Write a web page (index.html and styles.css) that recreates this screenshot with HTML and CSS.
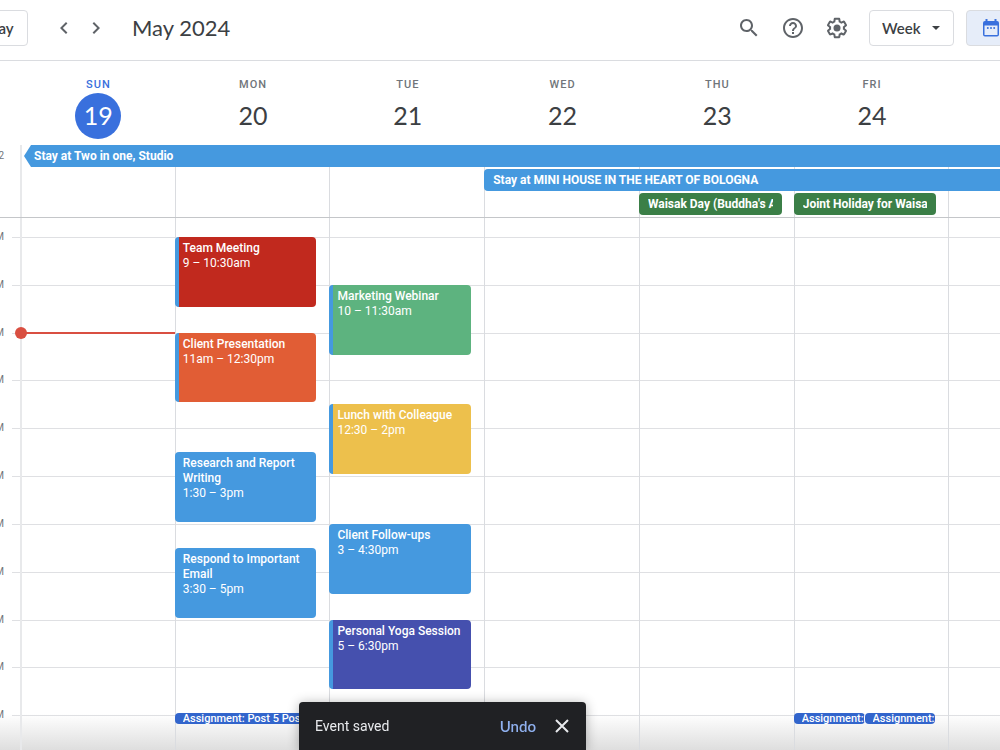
FILE: index.html
```html
<!DOCTYPE html>
<html lang="en">
<head>
    <meta charset="UTF-8">
    <meta name="viewport" content="width=device-width, initial-scale=1.0">
    <title>Calendar - May 2024</title>
    <link rel="stylesheet" href="styles.css">
</head>
<body>
    <header class="toolbar">
        <button class="box-btn today-btn" type="button">Today</button>
        <nav class="pager">
            <button class="icon-btn" type="button" aria-label="Previous week">
                <svg viewBox="0 0 24 24"><path d="M15.41 7.41L14 6l-6 6 6 6 1.41-1.41L10.83 12z"/></svg>
            </button>
            <button class="icon-btn" type="button" aria-label="Next week">
                <svg viewBox="0 0 24 24"><path d="M8.59 16.59L10 18l6-6-6-6-1.41 1.41L13.17 12z"/></svg>
            </button>
        </nav>
        <h1>May 2024</h1>
        <div class="tools">
            <button class="icon-btn" type="button" aria-label="Search">
                <svg viewBox="0 0 24 24"><path d="M15.5 14h-.79l-.28-.27C15.41 12.59 16 11.11 16 9.5 16 5.91 13.09 3 9.5 3S3 5.91 3 9.5 5.91 16 9.5 16c1.61 0 3.09-.59 4.23-1.57l.27.28v.79l5 4.99L20.49 19l-4.99-5zm-6 0C7.01 14 5 11.99 5 9.5S7.01 5 9.5 5 14 7.01 14 9.5 11.99 14 9.5 14z"/></svg>
            </button>
            <button class="icon-btn" type="button" aria-label="Support">
                <svg viewBox="0 0 24 24"><path d="M11 18h2v-2h-2v2zm1-16C6.48 2 2 6.48 2 12s4.48 10 10 10 10-4.48 10-10S17.52 2 12 2zm0 18c-4.41 0-8-3.59-8-8s3.59-8 8-8 8 3.59 8 8-3.59 8-8 8zm0-14c-2.21 0-4 1.79-4 4h2c0-1.1.9-2 2-2s2 .9 2 2c0 2-3 1.75-3 5h2c0-2.25 3-2.5 3-5 0-2.21-1.79-4-4-4z"/></svg>
            </button>
            <button class="icon-btn" type="button" aria-label="Settings">
                <svg viewBox="0 0 24 24"><path d="M13.85 22.25h-3.7c-.74 0-1.36-.54-1.45-1.27l-.27-1.89c-.27-.14-.53-.29-.79-.46l-1.8.72c-.7.26-1.47-.03-1.81-.65L2.2 15.53c-.35-.66-.2-1.44.36-1.88l1.53-1.19c-.01-.15-.02-.3-.02-.46 0-.15.01-.31.02-.46l-1.52-1.19c-.59-.45-.74-1.26-.37-1.88l1.85-3.19c.34-.62 1.11-.9 1.79-.63l1.81.73c.26-.17.52-.32.78-.46l.27-1.91c.09-.7.71-1.25 1.44-1.25h3.7c.74 0 1.36.54 1.45 1.27l.27 1.89c.27.14.53.29.79.46l1.8-.72c.71-.26 1.48.03 1.82.65l1.84 3.18c.36.66.2 1.44-.36 1.88l-1.52 1.19c.01.15.02.3.02.46s-.01.31-.02.46l1.52 1.19c.56.45.72 1.23.37 1.86l-1.86 3.22c-.34.62-1.11.9-1.8.63l-1.8-.72c-.26.17-.52.32-.78.46l-.27 1.91c-.1.68-.72 1.22-1.46 1.22zm-3.23-2h2.76l.37-2.55.53-.22c.44-.18.88-.44 1.34-.78l.45-.34 2.38.96 1.38-2.4-2.03-1.58.07-.56c.03-.26.06-.51.06-.78s-.03-.53-.06-.78l-.07-.56 2.03-1.58-1.39-2.4-2.39.96-.45-.35c-.42-.32-.87-.58-1.33-.77l-.52-.22-.37-2.55h-2.76l-.37 2.55-.53.21c-.44.19-.88.44-1.34.79l-.45.33-2.38-.95-1.39 2.39 2.03 1.58-.07.56a7 7 0 0 0-.06.79c0 .26.02.53.06.78l.07.56-2.03 1.58 1.38 2.4 2.39-.96.45.35c.43.33.86.58 1.33.77l.53.22.38 2.55z"/><circle cx="12" cy="12" r="3.5"/></svg>
            </button>
        </div>
        <label class="view-select">
            <select class="box-btn" aria-label="View">
                <option>Day</option>
                <option selected>Week</option>
                <option>Month</option>
            </select>
            <svg viewBox="0 0 8 4"><path d="M0 0h8L4 4z"/></svg>
        </label>
        <button class="box-btn calendar-btn" type="button" aria-label="Switch to Calendar">
            <svg viewBox="0 0 16 18"><path fill-rule="evenodd" d="M2.500 0h2v2h7V0h2v2H14a2 2 0 0 1 2 2v11.500a2 2 0 0 1-2 2H2a2 2 0 0 1-2-2V4a2 2 0 0 1 2-2h.5zM1.500 6.500v9.500h13v-9.500z"/><circle cx="4.800" cy="9" r="1"/><circle cx="8" cy="9" r="1"/><circle cx="11.200" cy="9" r="1"/></svg>
        </button>
    </header>

    <main class="calendar">
        <section class="week-grid day-names">
            <div class="day sun current"><span>SUN</span><b>19</b></div>
            <div class="day mon"><span>MON</span><b>20</b></div>
            <div class="day tue"><span>TUE</span><b>21</b></div>
            <div class="day wed"><span>WED</span><b>22</b></div>
            <div class="day thu"><span>THU</span><b>23</b></div>
            <div class="day fri"><span>FRI</span><b>24</b></div>
        </section>

        <section class="week-grid all-day">
            <div class="column sun"></div>
            <div class="column mon"></div>
            <div class="column tue"></div>
            <div class="column wed"></div>
            <div class="column thu"></div>
            <div class="column fri"></div>
            <div class="column sat"></div>
            <div class="gutter-label timezone">GMT+02</div>
            <div class="bar stay continued"><span>Stay at Two in one, Studio</span></div>
            <div class="bar stay from-wed"><span>Stay at MINI HOUSE IN THE HEART OF BOLOGNA</span></div>
            <div class="bar holiday thu"><span>Waisak Day (Buddha's Anniversary)</span></div>
            <div class="bar holiday fri"><span>Joint Holiday for Waisak Day</span></div>
        </section>

        <section class="week-grid hours">
            <div class="hour-line at-9"></div>
            <div class="hour-line at-10"></div>
            <div class="hour-line at-11"></div>
            <div class="hour-line at-12"></div>
            <div class="hour-line at-13"></div>
            <div class="hour-line at-14"></div>
            <div class="hour-line at-15"></div>
            <div class="hour-line at-16"></div>
            <div class="hour-line at-17"></div>
            <div class="hour-line at-18"></div>
            <div class="hour-line at-19"></div>

            <div class="column sun"></div>
            <div class="column mon"></div>
            <div class="column tue"></div>
            <div class="column wed"></div>
            <div class="column thu"></div>
            <div class="column fri"></div>
            <div class="column sat"></div>

            <div class="gutter-label at-9">9 AM</div>
            <div class="gutter-label at-10">10 AM</div>
            <div class="gutter-label at-11">11 AM</div>
            <div class="gutter-label at-12">12 PM</div>
            <div class="gutter-label at-13">1 PM</div>
            <div class="gutter-label at-14">2 PM</div>
            <div class="gutter-label at-15">3 PM</div>
            <div class="gutter-label at-16">4 PM</div>
            <div class="gutter-label at-17">5 PM</div>
            <div class="gutter-label at-18">6 PM</div>
            <div class="gutter-label at-19">7 PM</div>

            <article class="event mon at-9 red striped"><h2>Team Meeting</h2><p>9 – 10:30am</p></article>
            <article class="event mon at-11 orange striped"><h2>Client Presentation</h2><p>11am – 12:30pm</p></article>
            <article class="event mon at-13-30 blue"><h2>Research and Report Writing</h2><p>1:30 – 3pm</p></article>
            <article class="event mon at-15-30 blue"><h2>Respond to Important Email</h2><p>3:30 – 5pm</p></article>

            <article class="event tue at-10 green striped"><h2>Marketing Webinar</h2><p>10 – 11:30am</p></article>
            <article class="event tue at-12-30 yellow striped"><h2>Lunch with Colleague</h2><p>12:30 – 2pm</p></article>
            <article class="event tue at-15 blue"><h2>Client Follow-ups</h2><p>3 – 4:30pm</p></article>
            <article class="event tue at-17 indigo striped"><h2>Personal Yoga Session</h2><p>5 – 6:30pm</p></article>

            <div class="tasks mon at-19">
                <div class="task"><span>Assignment: Post 5 Posts</span></div>
            </div>
            <div class="tasks fri at-19">
                <div class="task"><span>Assignment:</span></div>
                <div class="task"><span>Assignment:</span></div>
            </div>

            <div class="now sun at-11"></div>
        </section>
    </main>

    <div class="toast" role="status">
        <p>Event saved</p>
        <button class="undo" type="button">Undo</button>
        <button class="close" type="button" aria-label="Close">
            <svg viewBox="0 0 14 14"><path d="M1 1l12 12M13 1L1 13"/></svg>
        </button>
    </div>
</body>
</html>
```
FILE: styles.css
```css
* {
    box-sizing: border-box;
}
body {
    display: flex;
    flex-direction: column;
    height: 100vh;
    margin: 0;
    overflow: hidden;
    background-color: #fff;
    color: #3c4043;
    font-family: Roboto, Arial, sans-serif;
    font-size: 12px;
}
h1, h2, p {
    margin: 0;
    font-weight: 400;
}
button, select {
    padding: 0;
    border: none;
    background: none;
    color: inherit;
    font-family: Lato, Roboto, sans-serif;
    cursor: pointer;
}

/* toolbar */
.toolbar {
    display: flex;
    align-items: center;
    flex: none;
    height: 61px;
    padding-bottom: 4px;
    border-bottom: 1px solid #dadce0;
}
.box-btn {
    flex: none;
    height: 36px;
    border: 1px solid #dadce0;
    border-radius: 4px;
    font-size: 15px;
    font-weight: 600;
}
.today-btn {
    width: 68px;
    margin-left: -40px;
}
.icon-btn {
    display: flex;
    align-items: center;
    justify-content: center;
    width: 32px;
    height: 32px;
    fill: #5f6368;
}
.icon-btn svg {
    width: 24px;
    height: 24px;
}
.pager {
    display: flex;
    margin-left: 20px;
}
.toolbar h1 {
    margin-left: 20px;
    font-family: Lato, Roboto, sans-serif;
    font-size: 22px;
    line-height: 28px;
}
.tools {
    display: flex;
    gap: 12px;
    margin-left: auto;
    margin-right: 16px;
}
.view-select {
    display: grid;
    align-items: center;
    margin-right: 12px;
}
.view-select select {
    grid-area: 1 / 1;
    width: 85px;
    padding-left: 12px;
    appearance: none;
}
.view-select svg {
    grid-area: 1 / 1;
    justify-self: end;
    width: 8px;
    height: 4px;
    margin-right: 14px;
    fill: #3c4043;
    pointer-events: none;
}
.calendar-btn {
    display: flex;
    align-items: center;
    width: 52px;
    margin-right: -18px;
    padding-left: 16px;
    background-color: #e6edf9;
    fill: #3970dd;
}
.calendar-btn svg {
    width: 16px;
    height: 18px;
}

/* week layout: gutter, six full days and the start of the seventh */
.calendar {
    display: flex;
    flex-direction: column;
    flex: 1;
    min-height: 0;
}
.week-grid {
    display: grid;
    grid-template-columns: 20px repeat(6, minmax(0, 3fr)) minmax(0, 1fr);
}
.sun { grid-column: 2; }
.mon { grid-column: 3; }
.tue { grid-column: 4; }
.wed { grid-column: 5; }
.thu { grid-column: 6; }
.fri { grid-column: 7; }
.sat { grid-column: 8; }

.day-names {
    padding: 17px 0 6px;
}
.day {
    display: flex;
    flex-direction: column;
    align-items: center;
    gap: 1px;
    padding-left: 2px;
}
.day span {
    color: #70757a;
    font-size: 11px;
    font-weight: 500;
    line-height: 14px;
    letter-spacing: 1px;
}
.day b {
    width: 46px;
    height: 46px;
    border-radius: 50%;
    font-family: Lato, Roboto, sans-serif;
    font-size: 25px;
    font-weight: 400;
    line-height: 44px;
    text-align: center;
}
.current span {
    color: #3970dd;
}
.current b {
    background-color: #3970dd;
    color: #fff;
}

.column {
    grid-row: 1 / -1;
    border-left: 1px solid #dadce0;
}
.column.sun {
    border-left: 2px solid #e8e9eb;
}
.gutter-label {
    display: flex;
    grid-column: 1;
    justify-content: flex-end;
    height: 14px;
    padding-right: 16px;
    color: #70757a;
    font-size: 10px;
    line-height: 14px;
    white-space: nowrap;
}

/* all-day events */
.all-day {
    grid-template-rows: repeat(3, 24px);
    border-bottom: 1px solid #c4c6c9;
}
.timezone {
    grid-row: 1;
    margin-top: 4px;
}
.bar {
    height: 22px;
    padding: 0 9px;
    border-radius: 4px;
    color: #fff;
    font-weight: 700;
    line-height: 22px;
}
.bar span {
    display: block;
    overflow: hidden;
    white-space: nowrap;
}
.stay {
    background-color: #4599df;
}
.continued {
    grid-area: 1 / 2 / auto / -1;
    margin-left: 4px;
    padding-left: 10px;
    border-radius: 0;
    clip-path: polygon(0 50%, 7px 0, 100% 0, 100% 100%, 7px 100%);
}
.from-wed {
    grid-area: 2 / 5 / auto / -1;
    border-radius: 4px 0 0 4px;
}
.holiday {
    grid-row: 3;
    margin-right: 12px;
    background-color: #3b7f47;
}

/* timed events, one row for each half hour */
.hours {
    flex: 1;
    grid-template-rows: 19px repeat(20, minmax(0, 11fr)) minmax(0, 16fr);
    min-height: 0;
    background: linear-gradient(to top, #dedede, #fff 36px);
}
.at-9 { grid-row: 2 / span 3; }
.at-10 { grid-row: 4 / span 3; }
.at-11 { grid-row: 6 / span 3; }
.at-12 { grid-row: 8 / span 3; }
.at-12-30 { grid-row: 9 / span 3; }
.at-13 { grid-row: 10 / span 3; }
.at-13-30 { grid-row: 11 / span 3; }
.at-14 { grid-row: 12 / span 3; }
.at-15 { grid-row: 14 / span 3; }
.at-15-30 { grid-row: 15 / span 3; }
.at-16 { grid-row: 16 / span 3; }
.at-17 { grid-row: 18 / span 3; }
.at-18 { grid-row: 20 / span 2; }
.at-19 { grid-row: 22; }

.hour-line {
    grid-column: 1 / -1;
    height: 1px;
    margin-left: 12px;
    background-color: #dfe0e3;
}
.hours .gutter-label {
    margin-top: -7px;
}
.event {
    margin: 0 13px 2px 0;
    padding: 4px 4px 0 8px;
    overflow: hidden;
    border-radius: 4px;
    color: #fff;
    line-height: 15px;
}
.event h2 {
    font-size: 12px;
    font-weight: 500;
}
.striped {
    padding-left: 4px;
    border-left: 4px solid #4599df;
}
.red { background-color: #c1291e; }
.orange { background-color: #e15d35; }
.blue { background-color: #4599df; }
.green { background-color: #5db37f; }
.yellow { background-color: #edc04c; }
.indigo { background-color: #4550ae; }

.tasks {
    display: flex;
    height: 11px;
    margin: -2px 13px 0 0;
}
.task {
    flex: 1;
    min-width: 0;
    padding-left: 8px;
    border-radius: 4px;
    background-color: #3265cc;
    color: #fff;
    font-size: 11px;
    font-weight: 500;
    line-height: 11px;
}
.task span {
    display: block;
    overflow: hidden;
    white-space: nowrap;
}
.task + .task {
    box-shadow: -1px 0 0 #fff;
}

.now {
    position: relative;
    height: 2px;
    margin-top: -1px;
    background-color: #d94f41;
}
.now::before {
    content: "";
    position: absolute;
    top: -5px;
    left: -5px;
    width: 12px;
    height: 12px;
    border-radius: 50%;
    background-color: #d94f41;
}

/* message at the bottom */
.toast {
    position: fixed;
    bottom: 0;
    left: 299px;
    display: flex;
    align-items: center;
    width: 287px;
    height: 48px;
    padding: 0 17px 0 16px;
    border-radius: 4px 4px 0 0;
    background-color: #202124;
    box-shadow: 0 1px 12px rgba(0, 0, 0, 0.3);
    color: #e8eaed;
    font-size: 14px;
}
.toast .undo {
    margin-left: auto;
    color: #8fb0ee;
    font-size: 15px;
    font-weight: 600;
}
.toast .close {
    margin-left: 19px;
}
.toast .close svg {
    display: block;
    width: 14px;
    height: 14px;
    fill: none;
    stroke: #e8eaed;
    stroke-width: 2;
}
```
